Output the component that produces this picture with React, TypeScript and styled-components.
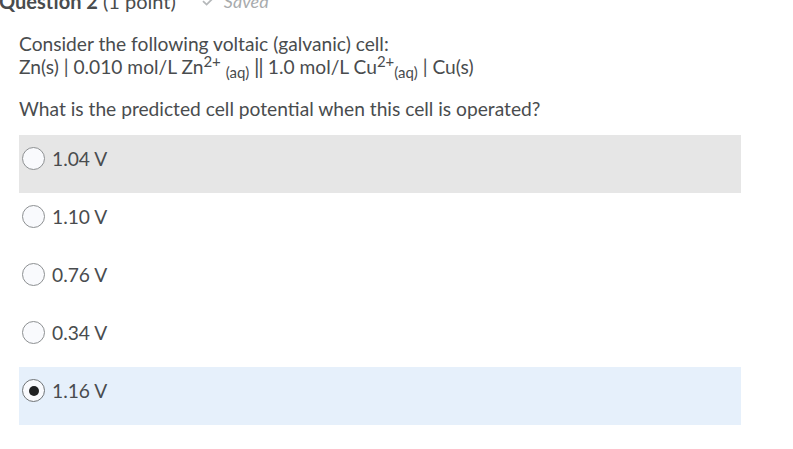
import styled, { createGlobalStyle } from "styled-components";

const GlobalStyle = createGlobalStyle`
  html, body {
    margin: 0;
    padding: 0;
    background: #fff;
  }
  body {
    font-family: Lato, "Open Sans", sans-serif;
    color: #494c4e;
    overflow: hidden;
  }
`;

const Page = styled.div`
  width: 793px;
  height: 449px;
  overflow: hidden;
`;

const Header = styled.div`
  display: flex;
  align-items: center;
  margin-top: -9px;
  height: 20px;
  line-height: 20px;
  font-size: 20px;
  white-space: nowrap;
`;

const Title = styled.span`
  font-weight: 700;
  margin-left: -1px;
`;

const Points = styled.span`
  font-weight: 400;
  margin-left: 5px;
`;

const SavedBox = styled.span`
  display: flex;
  align-items: center;
  gap: 9px;
  margin-left: 26px;
  color: #a8abad;
  font-size: 18px;
  font-style: italic;
`;

const Body = styled.div`
  padding: 0 0 0 19px;
`;

const Prompt = styled.div`
  margin-top: 22px;
  font-size: 19.2px;
  line-height: 22px;
`;

const Sup = styled.sup`
  font-size: 15px;
  line-height: 0;
  vertical-align: 0;
  position: relative;
  top: -7px;
`;

const Sub = styled.sub`
  font-size: 15px;
  line-height: 0;
  vertical-align: 0;
  position: relative;
  top: 4px;
`;

const Bars = styled.span`
  font-size: 22px;
  letter-spacing: -1px;
`;

const Ask = styled.div`
  margin-top: 20px;
  font-size: 19.2px;
  line-height: 22px;
`;

const Options = styled.div`
  margin-top: 15px;
  width: 722px;
  display: flex;
  flex-direction: column;
`;

const Row = styled.div<{ $tone?: "hover" | "selected" }>`
  height: 58px;
  box-sizing: border-box;
  display: flex;
  align-items: flex-start;
  gap: 7px;
  padding: 12px 0 0 3px;
  font-size: 19.2px;
  line-height: 23px;
  background: ${(p) =>
    p.$tone === "hover" ? "#e6e6e6" : p.$tone === "selected" ? "#e6f0fb" : "transparent"};
`;

const Radio = styled.span<{ $checked?: boolean }>`
  width: 23px;
  height: 23px;
  flex: none;
  box-sizing: border-box;
  border-radius: 50%;
  border: 1px solid ${(p) => (p.$checked ? "#6f7376" : "#8d9092")};
  background: #f9fafd;
  display: flex;
  align-items: center;
  justify-content: center;
  &::after {
    content: "";
    display: ${(p) => (p.$checked ? "block" : "none")};
    width: 10px;
    height: 10px;
    border-radius: 50%;
    background: #202122;
  }
`;

const answers = [
  { label: "1.04 V", tone: "hover" as const },
  { label: "1.10 V" },
  { label: "0.76 V" },
  { label: "0.34 V" },
  { label: "1.16 V", tone: "selected" as const, checked: true },
];

export default function App() {
  return (
    <Page>
      <GlobalStyle />
      <Header>
        <Title>Question 2</Title>
        <Points>(1 point)</Points>
        <SavedBox>
          <svg width="13" height="10" viewBox="0 0 13 10">
            <path d="M1 5.2 L4.6 8.6 L12 1.2" fill="none" stroke="#b5b8ba" strokeWidth="1.8" />
          </svg>
          Saved
        </SavedBox>
      </Header>
      <Body>
        <Prompt>
          <div>Consider the following voltaic (galvanic) cell:</div>
          <div>
            Zn(s) | 0.010 mol/L Zn<Sup>2+</Sup> <Sub>(aq)</Sub> <Bars>‖</Bars> 1.0 mol/L Cu
            <Sup>2+</Sup>
            <Sub>(aq)</Sub> | Cu(s)
          </div>
        </Prompt>
        <Ask>What is the predicted cell potential when this cell is operated?</Ask>
        <Options>
          {answers.map((a) => (
            <Row key={a.label} $tone={a.tone}>
              <Radio $checked={a.checked} />
              <span>{a.label}</span>
            </Row>
          ))}
        </Options>
      </Body>
    </Page>
  );
}
